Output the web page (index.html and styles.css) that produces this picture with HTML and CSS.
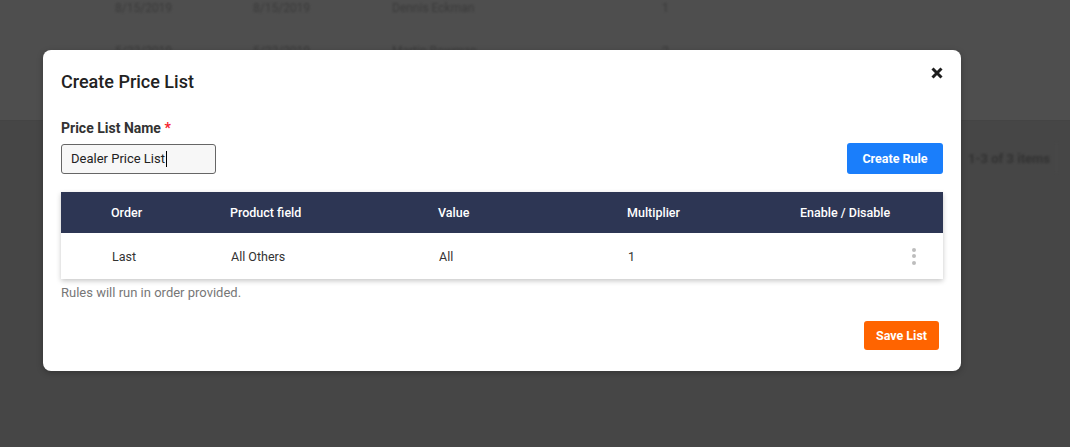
FILE: index.html
```html
<!DOCTYPE html>
<html>
<head>
<meta charset="utf-8">
<link rel="stylesheet" href="styles.css">
</head>
<body>
<div class="page">
  <div class="bg-top">
    <div class="bg-row"><span class="c1">8/15/2019</span><span class="c2">8/15/2019</span><span class="c3">Dennis Eckman</span><span class="c4">1</span></div>
    <div class="bg-row"><span class="c1">5/22/2019</span><span class="c2">5/22/2019</span><span class="c3">Martin Bowman</span><span class="c4">2</span></div>
  </div>
  <div class="bg-bottom">
    <div class="pager"><span class="pager-text">1-3 of 3 items</span><span class="pager-box"></span></div>
  </div>
</div>

<div class="modal">
  <div class="modal-head">
    <h2 class="title">Create Price List</h2>
    <svg class="close" width="12" height="12" viewBox="0 0 12 12"><path d="M1.5 1.5 L10.5 10.5 M10.5 1.5 L1.5 10.5" stroke="#1e1e1e" stroke-width="3" stroke-linecap="butt"/></svg>
  </div>
  <div class="field-label">Price List Name <span class="req">*</span></div>
  <div class="field-row">
    <div class="input">Dealer Price List<span class="caret"></span></div>
    <button class="btn btn-blue">Create Rule</button>
  </div>
  <div class="table">
    <div class="thead">
      <div>Order</div><div>Product field</div><div>Value</div><div>Multiplier</div><div>Enable / Disable</div>
    </div>
    <div class="trow">
      <div>Last</div><div>All Others</div><div>All</div><div>1</div>
      <div class="kebab-cell"><span class="kebab"><i></i><i></i><i></i></span></div>
    </div>
  </div>
  <div class="note">Rules will run in order provided.</div>
  <div class="footer">
    <button class="btn btn-orange">Save List</button>
  </div>
</div>
</body>
</html>
```

FILE: styles.css
```css
* { box-sizing: border-box; }
html, body { margin: 0; padding: 0; }
body {
  width: 1070px;
  height: 447px;
  overflow: hidden;
  font-family: Roboto, "Liberation Sans", Arial, sans-serif;
  background: #464646;
  position: relative;
}
.page { width: 100%; height: 100%; }
.bg-top {
  height: 121px;
  background: #4e4e4e;
  border-bottom: 1px solid #444;
  padding-top: 1px;
  overflow: hidden;
}
.bg-row {
  display: flex;
  height: 43px;
  align-items: center;
  font-size: 12px;
  color: #3b3b3b;
  filter: blur(0.8px);
}
.bg-row:first-child { margin-top: -15px; }
.bg-row span { display: block; }
.c1 { margin-left: 115px; width: 138px; }
.c2 { width: 139px; }
.c3 { width: 270px; }
.bg-bottom { position: relative; }
.pager {
  display: flex;
  justify-content: flex-end;
  align-items: center;
  padding-top: 22px;
  filter: blur(0.8px);
}
.pager-text {
  font-size: 13px;
  font-weight: 700;
  color: #333;
  margin-right: 6px;
}
.pager-box {
  width: 14px;
  height: 30px;
  border-left: 1px solid #4c4c4c;
}

.modal {
  position: absolute;
  left: 43px;
  top: 50px;
  width: 918px;
  height: 321px;
  background: #fff;
  border-radius: 8px;
  padding: 20px 18px 0 18px;
  box-shadow: 0 2px 6px rgba(0,0,0,0.25);
}
.modal-head {
  display: flex;
  justify-content: space-between;
  align-items: flex-start;
  height: 24px;
}
.title {
  margin: 0;
  font-size: 18px;
  font-weight: 500;
  color: #222;
  line-height: 24px;
}
.close {
  display: block;
  margin-top: -3px;
  margin-right: 0;
}
.field-label {
  margin-top: 26px;
  font-size: 14px;
  font-weight: 700;
  color: #333;
  line-height: 16px;
}
.req { color: #f5222d; }
.field-row {
  margin-top: 7px;
  display: flex;
  justify-content: space-between;
  align-items: center;
  height: 31px;
}
.input {
  width: 155px;
  height: 30px;
  border: 1px solid #666;
  border-radius: 3px;
  background: #f7f7f7;
  font-size: 13px;
  color: #222;
  line-height: 28px;
  padding-left: 9px;
  display: flex;
  align-items: center;
}
.caret {
  display: inline-block;
  width: 1px;
  height: 16px;
  background: #000;
  margin-left: 1px;
}
.btn {
  border: none;
  border-radius: 3px;
  color: #fff;
  font-family: Roboto, "Liberation Sans", Arial, sans-serif;
  font-weight: 700;
  font-size: 12.5px;
  padding: 0;
}
.btn-blue {
  width: 96px;
  height: 31px;
  background: #1a7efb;
}
.btn-orange {
  width: 75px;
  height: 29px;
  background: #ff6400;
}
.table {
  margin-top: 18px;
  box-shadow: 0 2px 5px rgba(0,0,0,0.22);
}
.thead, .trow {
  display: grid;
  grid-template-columns: 119px 208px 189px 173px 1fr;
  padding-left: 50px;
  align-items: center;
}
.thead {
  height: 41px;
  background: #2d3654;
  color: #fff;
  font-size: 12.5px;
  font-weight: 500;
}
.trow {
  height: 46px;
  background: #fff;
  color: #333;
  font-size: 12.5px;
}
.trow > div { padding-left: 1px; }
.kebab-cell {
  display: flex;
  justify-content: flex-end;
  padding-right: 27px;
}
.kebab {
  display: flex;
  flex-direction: column;
  gap: 2.5px;
}
.kebab i {
  display: block;
  width: 4px;
  height: 4px;
  border-radius: 50%;
  background: #bdbdbd;
}
.note {
  margin-top: 7px;
  font-size: 13px;
  color: #777;
  line-height: 14px;
}
.footer {
  display: flex;
  justify-content: flex-end;
  padding-right: 4px;
  margin-top: 21px;
}
```
